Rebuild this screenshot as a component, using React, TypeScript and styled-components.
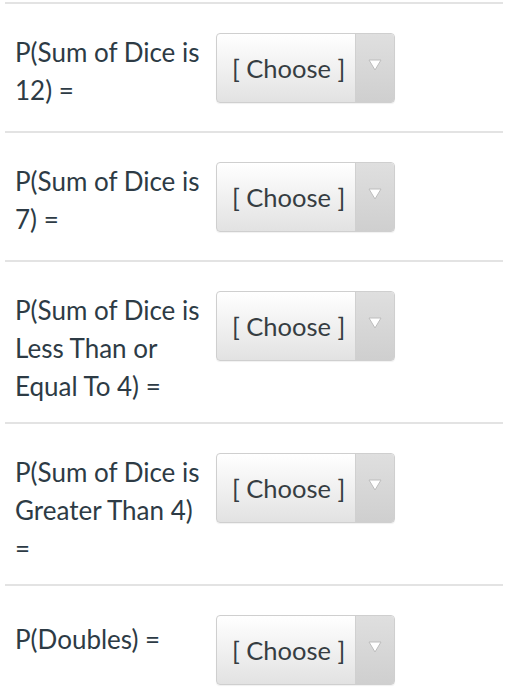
import React from "react";
import styled, { createGlobalStyle } from "styled-components";

const questions: { label: string; offset?: number }[] = [
  { label: "P(Sum of Dice is 12) =" },
  { label: "P(Sum of Dice is 7) =" },
  { label: "P(Sum of Dice is Less Than or Equal To 4) =" },
  { label: "P(Sum of Dice is Greater Than 4) =" },
  { label: "P(Doubles) =", offset: 5 },
];

const GlobalStyle = createGlobalStyle`
  body {
    margin: 0;
    background: #ffffff;
    font-family: Lato, "Open Sans", sans-serif;
    color: #2d3b45;
  }
`;

const App = () => {
  return (
    <>
      <GlobalStyle />
      <QuestionList>
        {questions.map((q, index) => (
          <QuestionRow key={index}>
            <Label offset={q.offset || 0}>{q.label}</Label>
            <SelectBox>
              <SelectValue>[ Choose ]</SelectValue>
              <ArrowPart>
                <svg width="14" height="12" viewBox="0 0 14 12">
                  <path
                    d="M1 1 H13 L7 11 Z"
                    fill="#ffffff"
                    stroke="#bdbdbd"
                    strokeWidth="1"
                    strokeLinejoin="round"
                  />
                </svg>
              </ArrowPart>
            </SelectBox>
          </QuestionRow>
        ))}
      </QuestionList>
    </>
  );
};

const QuestionList = styled.div`
  padding: 2px 2px 0 5px;
`;

const QuestionRow = styled.div`
  display: flex;
  flex-direction: row;
  align-items: flex-start;
  border-top: 2px solid #e3e3e3;
  padding: 29px 0 0 10px;
`;

const Label = styled.div<{ offset: number }>`
  width: 192px;
  margin-right: 9px;
  padding-top: ${({ offset }) => offset}px;
  padding-bottom: 17px;
  font-size: 26px;
  line-height: 38px;
  color: #2d3b45;
`;

const SelectBox = styled.div`
  flex-shrink: 0;
  display: flex;
  flex-direction: row;
  width: 179px;
  height: 70px;
  margin-bottom: 28px;
  box-sizing: border-box;
  border: 1px solid #cfcfcf;
  border-radius: 4px;
  overflow: hidden;
  background: linear-gradient(#ffffff, #e2e2e2);
  box-shadow: 0 1px 1px rgba(0, 0, 0, 0.06);
`;

const SelectValue = styled.div`
  flex: 1;
  display: flex;
  align-items: center;
  padding: 0 0 0 15px;
  font-size: 25.5px;
  color: #363d42;
  white-space: nowrap;
`;

const ArrowPart = styled.div`
  width: 39px;
  display: flex;
  justify-content: center;
  align-items: flex-start;
  padding-top: 25px;
  box-sizing: border-box;
  border-left: 1px solid #d0d0d0;
  background: linear-gradient(#dfdfdf, #cfcfcf);
`;

export default App;
